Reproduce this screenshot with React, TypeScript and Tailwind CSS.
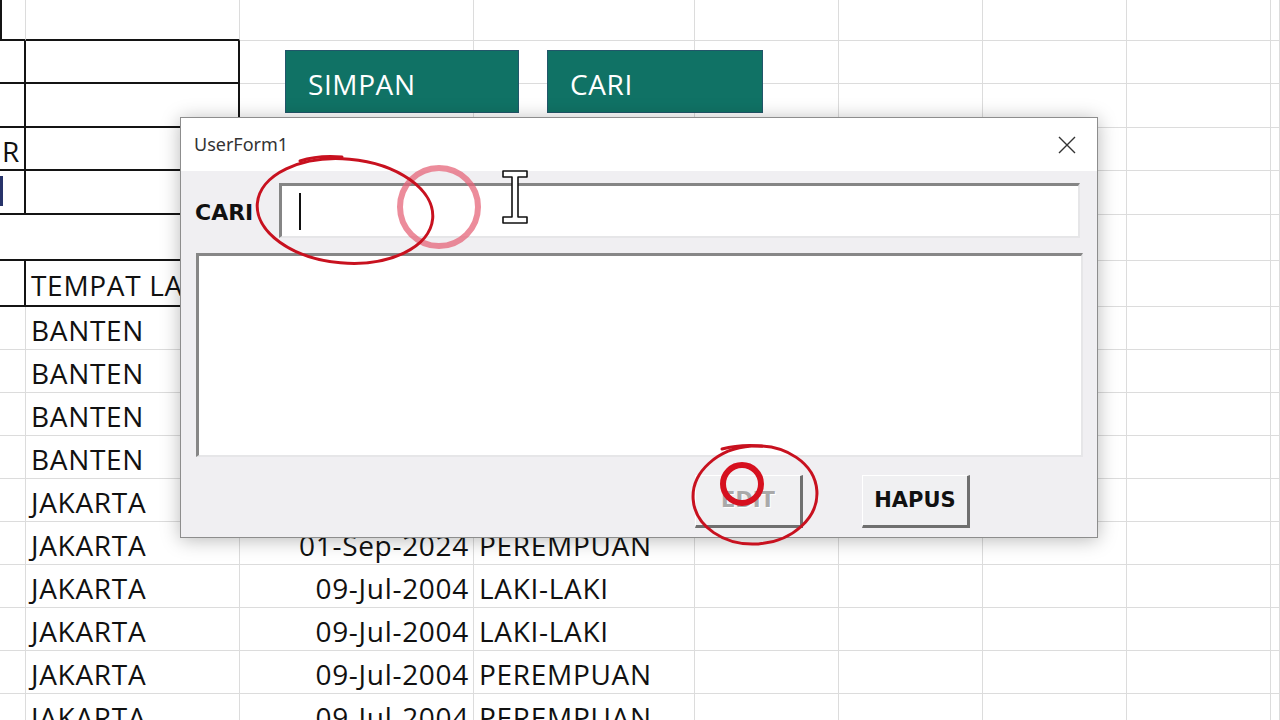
import React from "react";

const ROW_H = [41, 43, 44, 43, 44, 46, 46, 43, 43, 43, 43, 43, 43, 43, 43, 43, 43];
const COL_W = [26, 214, 234, 221, 144, 144, 144, 144, 9];

type CellData = { text?: string; align?: "left" | "right" };

function cellData(r: number, c: number): CellData {
  if (r === 3 && c === 0) return { text: "R", align: "right" };
  if (r === 6 && c === 1) return { text: "TEMPAT LAHIR" };
  if (r >= 7 && r <= 10 && c === 1) return { text: "BANTEN" };
  if (r >= 11 && c === 1) return { text: "JAKARTA" };
  if (c === 2) {
    if (r === 12) return { text: "01-Sep-2024", align: "right" };
    if (r >= 13) return { text: "09-Jul-2004", align: "right" };
  }
  if (c === 3) {
    if (r === 12) return { text: "PEREMPUAN" };
    if (r === 13 || r === 14) return { text: "LAKI-LAKI" };
    if (r >= 15) return { text: "PEREMPUAN" };
  }
  return {};
}

function rightBorder(r: number, c: number): string {
  if (c === 0 && r >= 1 && r <= 4) return "border-r-2 border-r-[#141414]";
  if (c === 1 && r >= 1 && r <= 4) return "border-r-2 border-r-[#141414]";
  if (c === 0 && r === 5) return "";
  if (c === 0 && r === 6) return "border-r-2 border-r-[#141414]";
  return "border-r border-r-[#dcdcdc]";
}

function bottomBorder(r: number, c: number): string {
  if (r <= 4 && c <= 1) return "border-b-2 border-b-[#141414]";
  if ((r === 5 || r === 6) && c <= 3) return "border-b-2 border-b-[#141414]";
  return "border-b border-b-[#dcdcdc]";
}

function Sheet() {
  return (
    <div className="flex flex-col bg-white font-['Open_Sans',sans-serif] text-[28px] tracking-[0.7px] text-[#111]">
      {ROW_H.map((h, r) => (
        <div key={r} className="flex shrink-0" style={{ height: h }}>
          {COL_W.map((w, c) => {
            const d = cellData(r, c);
            const left = r === 0 && c === 0 ? "border-l-2 border-l-[#141414]" : "";
            return (
              <div
                key={c}
                className={`box-border shrink-0 flex items-center overflow-hidden whitespace-nowrap pt-[4px] ${rightBorder(r, c)} ${bottomBorder(r, c)} ${left} ${
                  d.align === "right" ? "justify-end pr-[4px]" : "justify-start pl-[5px]"
                }`}
                style={{ width: w }}
              >
                {d.text}
              </div>
            );
          })}
        </div>
      ))}
    </div>
  );
}

function TealButton({ label, className }: { label: string; className: string }) {
  return (
    <div
      className={`absolute top-[50px] h-[63px] bg-[#107265] border border-[#22566a] flex items-center pl-[22px] pt-[4px] text-white font-['Open_Sans',sans-serif] text-[28px] tracking-[0.6px] ${className}`}
    >
      {label}
    </div>
  );
}

function Dialog() {
  return (
    <div className="absolute left-[180px] top-[117px] w-[918px] h-[421px] box-border border border-[#8d8d8d] bg-[#f0eff2] flex flex-col shadow-[0_2px_18px_rgba(0,0,0,0.28)]">
      <div className="h-[53px] shrink-0 bg-white flex items-center justify-between pl-[13px] pr-[20px]">
        <span className="font-['Noto_Sans',sans-serif] text-[18px] text-[#333]">UserForm1</span>
        <svg width="20" height="20" viewBox="0 0 20 20">
          <path d="M2 2 L18 18 M18 2 L2 18" stroke="#333" strokeWidth="1.4" fill="none" />
        </svg>
      </div>
      <div className="flex-1 flex flex-col pl-[14px] pt-[12px]">
        <div className="flex items-center h-[55px]">
          <div className="w-[84px] pt-[3px] font-['DejaVu_Sans',sans-serif] font-bold text-[22px] text-[#111]">CARI</div>
          <div className="w-[801px] h-[55px] box-border bg-white border-t-[3px] border-l-[3px] border-t-[#858585] border-l-[#858585] border-b-2 border-r-2 border-b-[#e6e6e8] border-r-[#e6e6e8] flex items-center">
            <div className="ml-[17px] w-[2px] h-[37px] bg-[#111]" />
          </div>
        </div>
        <div className="mt-[15px] ml-[1px] w-[887px] h-[204px] box-border bg-white border-t-[3px] border-l-[3px] border-t-[#878787] border-l-[#878787] border-b-2 border-r-2 border-b-[#e6e6e8] border-r-[#e6e6e8]" />
        <div className="mt-[18px] pl-[500px] flex gap-[59px]">
          <div className="w-[108px] h-[53px] box-border bg-[#f0f0f2] border-t border-l border-t-white border-l-white border-r-[3px] border-b-[3px] border-r-[#6f6f6f] border-b-[#6f6f6f] flex items-center justify-center font-['DejaVu_Sans',sans-serif] font-bold text-[21px] text-[#a9a9a9] [text-shadow:1px_1px_0_#ffffff]">
            EDIT
          </div>
          <div className="w-[108px] h-[53px] box-border bg-[#f0f0f2] border-t border-l border-t-white border-l-white border-r-[3px] border-b-[3px] border-r-[#6f6f6f] border-b-[#6f6f6f] flex items-center justify-center font-['DejaVu_Sans',sans-serif] font-bold text-[21px] text-[#111]">
            HAPUS
          </div>
        </div>
      </div>
    </div>
  );
}

function Annotations() {
  return (
    <svg className="absolute left-0 top-0 pointer-events-none" width="1280" height="720" viewBox="0 0 1280 720">
      <circle cx="439" cy="207" r="39" fill="none" stroke="#e5667a" strokeOpacity="0.75" strokeWidth="6" />
      <ellipse cx="345" cy="211" rx="88" ry="52" transform="rotate(5 345 211)" fill="none" stroke="#c8111f" strokeWidth="3" />
      <path d="M300 161 Q318 155 342 157" fill="none" stroke="#c8111f" strokeWidth="3" strokeLinecap="round" />
      <polygon
        points="503,171 527,171 527,177 518,177 518,217 527,217 527,223 503,223 503,217 512,217 512,177 503,177"
        fill="#ffffff"
        stroke="#111"
        strokeWidth="1.6"
        strokeLinejoin="round"
      />
      <ellipse cx="755" cy="495" rx="62" ry="49" transform="rotate(-4 755 495)" fill="none" stroke="#c8111f" strokeWidth="3" />
      <path d="M722 449 Q740 444 762 446" fill="none" stroke="#c8111f" strokeWidth="3" strokeLinecap="round" />
      <circle cx="742" cy="484" r="19" fill="none" stroke="#d6101f" strokeWidth="6" />
    </svg>
  );
}

export default function App() {
  return (
    <div className="relative w-[1280px] h-[720px] overflow-hidden bg-white">
      <Sheet />
      <TealButton label="SIMPAN" className="left-[285px] w-[234px]" />
      <TealButton label="CARI" className="left-[547px] w-[216px]" />
      <div className="absolute left-0 top-[176px] w-[3px] h-[30px] bg-[#27336a]" />
      <Dialog />
      <Annotations />
    </div>
  );
}
